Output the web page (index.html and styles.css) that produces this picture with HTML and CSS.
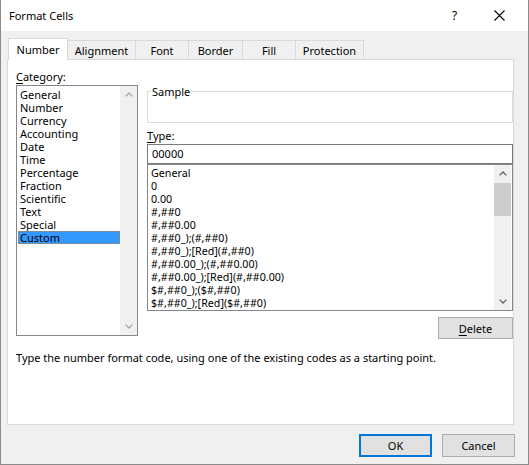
FILE: index.html
```html
<!DOCTYPE html>
<html>
<head>
<meta charset="utf-8">
<link rel="stylesheet" href="styles.css">
</head>
<body>
<div class="window">
  <div class="titlebar">
    <div class="title">Format Cells</div>
    <div class="tb-btn help">?</div>
    <div class="tb-btn close">
      <svg width="11" height="11" viewBox="0 0 11 11"><path d="M0.5 0.5 L10.5 10.5 M10.5 0.5 L0.5 10.5" stroke="#000" stroke-width="1.1" fill="none"/></svg>
    </div>
  </div>
  <div class="main">
    <div class="tabs">
      <div class="tab active w-number">Number</div>
      <div class="tab w-align">Alignment</div>
      <div class="tab w-font">Font</div>
      <div class="tab w-border">Border</div>
      <div class="tab w-fill">Fill</div>
      <div class="tab w-prot">Protection</div>
    </div>
    <div class="panel">
      <div class="row">
        <div class="left">
          <div class="label"><u>C</u>ategory:</div>
          <div class="listbox cat">
            <div class="items">
              <div class="item">General</div>
              <div class="item">Number</div>
              <div class="item">Currency</div>
              <div class="item">Accounting</div>
              <div class="item">Date</div>
              <div class="item">Time</div>
              <div class="item">Percentage</div>
              <div class="item">Fraction</div>
              <div class="item">Scientific</div>
              <div class="item">Text</div>
              <div class="item">Special</div>
              <div class="item selected">Custom</div>
            </div>
            <div class="scrollbar">
              <div class="arrow"><svg width="8" height="5" viewBox="0 0 8 5"><path d="M0.6 4.4 L4 1 L7.4 4.4" stroke="#a6a6a6" stroke-width="1.3" fill="none"/></svg></div>
              <div class="track"></div>
              <div class="arrow"><svg width="8" height="5" viewBox="0 0 8 5"><path d="M0.6 0.6 L4 4 L7.4 0.6" stroke="#a6a6a6" stroke-width="1.3" fill="none"/></svg></div>
            </div>
          </div>
        </div>
        <div class="right">
          <fieldset class="sample"><legend>Sample</legend></fieldset>
          <div class="label type-label"><u>T</u>ype:</div>
          <div class="input">00000</div>
          <div class="listbox fmt">
            <div class="items">
              <div class="item">General</div>
              <div class="item">0</div>
              <div class="item">0.00</div>
              <div class="item">#,##0</div>
              <div class="item">#,##0.00</div>
              <div class="item">#,##0_);(#,##0)</div>
              <div class="item">#,##0_);[Red](#,##0)</div>
              <div class="item">#,##0.00_);(#,##0.00)</div>
              <div class="item">#,##0.00_);[Red](#,##0.00)</div>
              <div class="item">$#,##0_);($#,##0)</div>
              <div class="item">$#,##0_);[Red]($#,##0)</div>
            </div>
            <div class="scrollbar fmt-bar">
              <div class="arrow"><svg width="8" height="5" viewBox="0 0 8 5"><path d="M0.6 4.4 L4 1 L7.4 4.4" stroke="#606060" stroke-width="1.3" fill="none"/></svg></div>
              <div class="thumb"></div>
              <div class="track"></div>
              <div class="arrow"><svg width="8" height="5" viewBox="0 0 8 5"><path d="M0.6 0.6 L4 4 L7.4 0.6" stroke="#606060" stroke-width="1.3" fill="none"/></svg></div>
            </div>
          </div>
          <div class="btn delete"><u>D</u>elete</div>
        </div>
      </div>
      <div class="desc">Type the number format code, using one of the existing codes as a starting point.</div>
    </div>
    <div class="footer">
      <div class="btn ok">OK</div>
      <div class="btn cancel">Cancel</div>
    </div>
  </div>
</div>
</body>
</html>
```

FILE: styles.css
```css
* { box-sizing: border-box; }
html, body { margin: 0; padding: 0; }
body {
  width: 529px;
  height: 465px;
  overflow: hidden;
  background: #f0f0f0;
  font-family: "Noto Sans", "DejaVu Sans", sans-serif;
  font-size: 11px;
  color: #000;
}
u { text-decoration: underline; text-underline-offset: 2px; }

.window {
  width: 529px;
  height: 465px;
  border: 1px solid #8c8c8c;
  border-top: 0;
  background: #f0f0f0;
  display: flex;
  flex-direction: column;
}

.titlebar {
  height: 31px;
  flex: none;
  background: #fff;
  display: flex;
  align-items: center;
  padding-left: 8px;
  padding-right: 6px;
}
.title { flex: 1; line-height: 15px; }
.tb-btn {
  width: 45px;
  height: 31px;
  display: flex;
  align-items: center;
  justify-content: center;
}
.help { font-size: 12px; }

.main {
  padding: 7px 14px 0 6px;
  display: flex;
  flex-direction: column;
}

.tabs {
  display: flex;
  align-items: flex-end;
  height: 21px;
  margin-left: 1px;
}
.tab {
  height: 19px;
  border: 1px solid #d9d9d9;
  border-bottom: 0;
  background: #f0f0f0;
  margin-left: -1px;
  text-align: center;
  line-height: 14px;
  padding-top: 3px;
}
.tab:first-child { margin-left: 0; }
.tab.active {
  height: 22px;
  background: #fff;
  margin-bottom: -1px;
  position: relative;
  z-index: 1;
  padding-top: 4px;
}
.w-number { width: 60px; }
.w-align { width: 69px; }
.w-font { width: 54px; }
.w-border { width: 55px; }
.w-fill { width: 54px; }
.w-prot { width: 69px; }

.panel {
  height: 366px;
  border: 1px solid #d9d9d9;
  background: #fff;
  padding: 9px 0 0 8px;
}
.row { display: flex; gap: 9px; }
.left { width: 122px; display: flex; flex-direction: column; }
.right { width: 366px; display: flex; flex-direction: column; }
.label { line-height: 15px; height: 15px; }

.listbox {
  border: 1px solid #828790;
  background: #fff;
  display: flex;
  overflow: hidden;
}
.listbox .items { flex: 1; overflow: hidden; }
.item { line-height: 13px; height: 13px; white-space: nowrap; }

.cat { height: 251px; margin-top: 1px; }
.cat .items { padding: 2px 0 0 1px; }
.cat .item { padding-left: 2px; }
.cat .item.selected {
  background: #3399ff;
  outline: 1px dotted #c08040;
  outline-offset: -1px;
}

.scrollbar {
  width: 17px;
  flex: none;
  background: #f0f0f0;
  display: flex;
  flex-direction: column;
}
.scrollbar .arrow {
  height: 17px;
  flex: none;
  display: flex;
  align-items: center;
  justify-content: center;
}
.scrollbar .track { flex: 1; }
.scrollbar .thumb {
  height: 33px;
  margin-top: 1px;
  background: #cdcdcd;
  flex: none;
}

.sample {
  margin: 16px 0 0 0;
  padding: 0 0 0 3px;
  height: 38px;
  border: 1px solid #dcdcdc;
}
.sample legend {
  padding: 0 1px;
  line-height: 13px;
}

.type-label { margin-top: 6px; height: 14px; line-height: 14px; margin-bottom: 1px; }
.input {
  height: 20px;
  border: 1px solid #7a7a7a;
  padding-left: 4px;
  line-height: 18px;
}
.fmt { height: 147px; }
.fmt .items { padding: 2px 0 0 3px; font-size: 10.7px; }
.fmt-bar { margin-right: 1px; }

.btn {
  background: #e1e1e1;
  border: 1px solid #adadad;
  display: flex;
  align-items: center;
  justify-content: center;
}
.delete {
  width: 75px;
  height: 22px;
  margin-top: 6px;
  align-self: flex-end;
}

.desc { margin-top: 12px; line-height: 14px; }

.footer {
  display: flex;
  justify-content: flex-end;
  gap: 10px;
  margin-top: 9px;
  margin-right: -1px;
}
.ok, .cancel { width: 73px; height: 23px; }
.ok { border: 2px solid #0078d7; }
```
